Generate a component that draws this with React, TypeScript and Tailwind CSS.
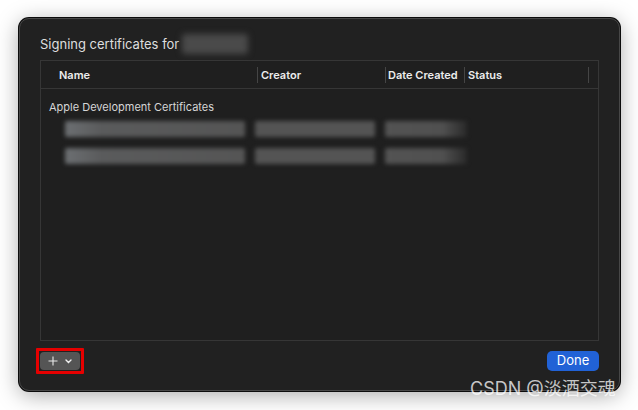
const font = { fontFamily: '"Inter", "Liberation Sans", "Noto Sans CJK SC", sans-serif' };

function BlurRow() {
  return (
    <div className="flex h-[17px] items-center pl-[16px]">
      <div className="h-[16px] w-[180px] rounded-[2px] bg-[linear-gradient(90deg,#6c6f72_0%,#5a5b5c_20%,#555_100%)] blur-[2px]" />
      <div className="w-[10px]" />
      <div className="h-[16px] w-[120px] rounded-[2px] bg-[#545454] blur-[2px]" />
      <div className="w-[10px]" />
      <div className="h-[16px] w-[82px] rounded-[2px] bg-[linear-gradient(90deg,#535353_0%,#505050_70%,#2a2a2a_100%)] blur-[2px]" />
    </div>
  );
}

export default function App() {
  return (
    <div className="relative h-[410px] w-[638px] overflow-hidden bg-white" style={font}>
      <div className="ml-[19px] mt-[18px] flex h-[373px] w-[601px] flex-col rounded-[10px] border border-[#474747] bg-[#212121] px-[20px] shadow-[0_0_0_1px_#0c0c0c,0_4px_22px_rgba(0,0,0,0.35)]">
        {/* Title */}
        <div className="flex h-[41px] items-end pb-[6px]">
          <span className="text-[13px] text-[#dedede]">Signing certificates for</span>
          <div className="ml-[3px] h-[20px] w-[66px] rounded-[3px] bg-[#4a4a4a] blur-[3px]" />
        </div>

        {/* Table */}
        <div className="flex h-[281px] flex-col border border-[#363636] bg-[#1f1f1f]">
          <div className="flex h-[28px] shrink-0 items-center border-b border-[#363636] text-[11px] font-semibold text-[#ededed]">
            <div className="mt-[2px] w-[216px] pl-[18px]">Name</div>
            <div className="h-[16px] w-px bg-[#454545]" />
            <div className="mt-[2px] w-[127px] pl-[3px]">Creator</div>
            <div className="h-[16px] w-px bg-[#454545]" />
            <div className="mt-[2px] w-[78px] pl-[2px]">Date Created</div>
            <div className="h-[16px] w-px bg-[#454545]" />
            <div className="mt-[2px] w-[123px] pl-[3px]">Status</div>
            <div className="h-[16px] w-px bg-[#454545]" />
          </div>
          <div className="flex flex-col pl-[8px]">
            <div className="mt-[10px] h-[16px] text-[11px] leading-[16px] text-[#d6d6d6]">
              Apple Development Certificates
            </div>
            <div className="mt-[5px] flex flex-col gap-[10px]">
              <BlurRow />
              <BlurRow />
            </div>
          </div>
        </div>

        {/* Footer */}
        <div className="flex flex-1 items-center justify-between pb-[9px]">
          <div className="-ml-[4px] rounded-[1px] border-[3px] border-[#e60000] p-px">
            <div className="flex h-[18px] w-[40px] items-center justify-center gap-[7px] rounded-[4px] bg-[#555555]">
              <svg width="10" height="10" viewBox="0 0 10 10">
                <path d="M5 0.5V9.5M0.5 5H9.5" stroke="#e8e8e8" strokeWidth="1.1" />
              </svg>
              <svg width="7" height="5" viewBox="0 0 7 5">
                <path d="M1 1L3.5 3.5L6 1" stroke="#f0f0f0" strokeWidth="1.4" fill="none" strokeLinecap="round" />
              </svg>
            </div>
          </div>
          <button className="flex h-[20px] w-[52px] items-center justify-center rounded-[5px] bg-[#2162d6] text-[13px] text-white">
            Done
          </button>
        </div>
      </div>

      {/* Watermark */}
      <div className="absolute left-[470px] top-[377px] text-[18px] leading-[24px] text-white/75">
        CSDN @淡酒交魂
      </div>
    </div>
  );
}
